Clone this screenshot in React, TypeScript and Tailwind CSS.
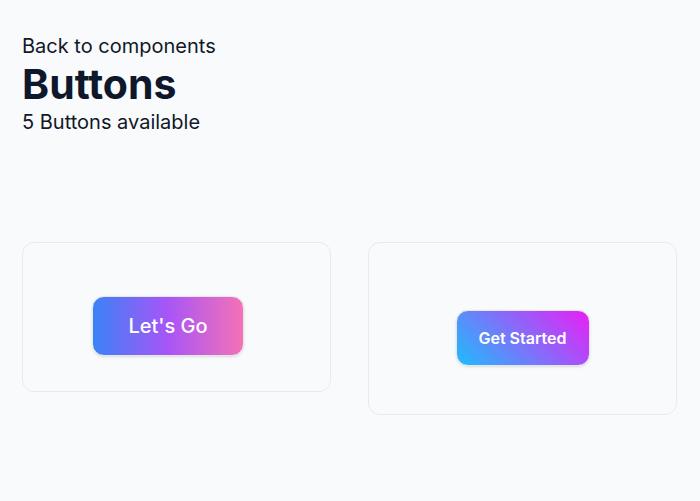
import React from "react";

export default function App() {
  return (
    <div className="min-h-[501px] bg-[#f8fafc] px-[22px] pt-[32px] text-[#0f172a]" style={{ fontFamily: "Inter, 'Noto Sans', sans-serif" }}>
      <div className="text-[20px] leading-[28px] text-[#111827]">Back to components</div>
      <h1 className="text-[41px] leading-[48px] font-bold text-[#0f172a]">Buttons</h1>
      <div className="text-[20px] leading-[28px] text-[#111827]">5 Buttons available</div>
      <div className="mt-[106px] grid grid-cols-2 items-start gap-[37px] pr-[1px]">
        <div className="flex h-[150px] rounded-xl border border-[#e8eaee] bg-[#f8fafc] pl-[69px] pt-[53px]">
          <button className="h-[60px] w-[152px] rounded-xl border border-[#e5e7eb] bg-[linear-gradient(to_right,#3b82f6,#a855f7,#f472b6)] text-[20px] font-medium text-white shadow-sm">
            Let's Go
          </button>
        </div>
        <div className="flex h-[173px] justify-center rounded-xl border border-[#e8eaee] bg-[#f8fafc] pt-[67px]">
          <button className="h-[56px] w-[134px] rounded-xl border border-[#e5e7eb] bg-[linear-gradient(45deg,#1ebcfc,#e91ff7)] text-[16px] font-semibold text-white shadow-sm">
            Get Started
          </button>
        </div>
      </div>
    </div>
  );
}
